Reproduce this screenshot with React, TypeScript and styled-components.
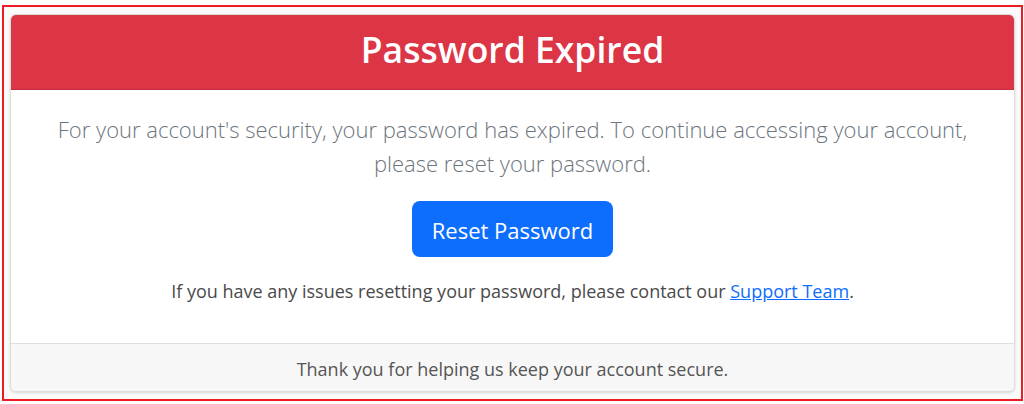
import { FC } from 'react'
import styled, { createGlobalStyle } from 'styled-components'

const GlobalStyle = createGlobalStyle`
  html, body {
    margin: 0;
    padding: 0;
    background: #ffffff;
  }
  body {
    font-family: 'Open Sans', 'Noto Sans', sans-serif;
  }
`

const App: FC = () => {
  return (
    <>
      <GlobalStyle />
      <Frame>
        <Card>
          <Header>
            <Title>Password Expired</Title>
          </Header>
          <Body>
            <Lead>
              For your account's security, your password has expired. To continue accessing your account,
              please reset your password.
            </Lead>
            <ResetButton type={'button'}>Reset Password</ResetButton>
            <Note>
              If you have any issues resetting your password, please contact our <a href={'#'}>Support Team</a>.
            </Note>
          </Body>
          <Footer>Thank you for helping us keep your account secure.</Footer>
        </Card>
      </Frame>
    </>
  )
}

export default App

const Frame = styled.div`
  margin: 5px 1px 0 2px;
  height: 396px;
  box-sizing: border-box;
  border: 2px solid #ed1c24;
  padding: 7px 6px 7px 6px;
  background: #fbfbfb;
`
const Card = styled.div`
  height: 100%;
  box-sizing: border-box;
  display: flex;
  flex-direction: column;
  border: 1px solid #dcdcdc;
  border-radius: 6px;
  overflow: hidden;
  background: #fff;
  box-shadow: 0 1px 3px rgba(0, 0, 0, 0.15);
`
const Header = styled.div`
  height: 75px;
  display: flex;
  align-items: center;
  justify-content: center;
  padding-bottom: 6px;
  box-sizing: border-box;
  background: #dc3545;
  border-bottom: 1px solid rgba(0, 0, 0, 0.125);
`
const Title = styled.h1`
  margin: 0;
  color: #fff;
  font-size: 35.5px;
  font-weight: 600;
`
const Body = styled.div`
  flex: 1;
  display: flex;
  flex-direction: column;
  align-items: center;
  padding: 22px 20px 0;
  text-align: center;
`
const Lead = styled.p`
  margin: 0 0 21px;
  color: #6c757d;
  font-size: 22px;
  font-weight: 300;
  line-height: 34px;
`
const ResetButton = styled.button`
  height: 56px;
  padding: 0 20px;
  border: none;
  border-radius: 8px;
  background: #0d6efd;
  color: #fff;
  font-family: inherit;
  font-size: 22px;
  line-height: 1;
  padding-top: 2px;
  cursor: pointer;
`
const Note = styled.p`
  margin: 22px 0 0;
  color: #4a4a4a;
  font-size: 18px;

  a {
    color: #0d6efd;
  }
`
const Footer = styled.div`
  height: 48px;
  display: flex;
  align-items: center;
  justify-content: center;
  padding-top: 2px;
  box-sizing: border-box;
  background: #f7f7f7;
  border-top: 1px solid #dfdfdf;
  color: #555;
  font-size: 18px;
`
